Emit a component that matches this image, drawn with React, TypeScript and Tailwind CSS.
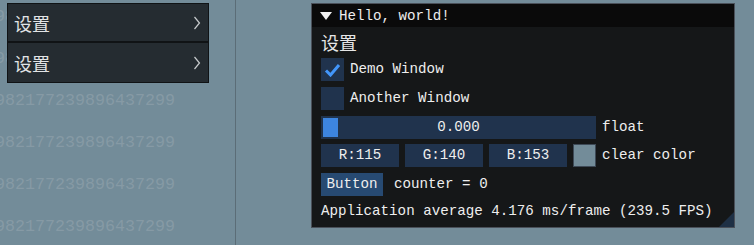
import React from "react";

const mono = { fontFamily: '"Liberation Mono", "DejaVu Sans Mono", monospace' };
const cjk = { fontFamily: '"Noto Sans CJK SC", "Noto Sans", sans-serif' };

function Chevron() {
  return (
    <svg width="8" height="14" viewBox="0 0 8 14" className="block">
      <polyline points="1.5,1 6.5,7 1.5,13" fill="none" stroke="#c9ccce" strokeWidth="1.2" />
    </svg>
  );
}

function MenuRow({ last }: { last?: boolean }) {
  return (
    <div
      className={`flex h-[39px] items-center justify-between pl-[6px] pr-[7px] ${last ? "" : "border-b-2 border-[#101315]"}`}
    >
      <span className="text-[18px] leading-none text-[#e2e4e5]" style={cjk}>
        设置
      </span>
      <Chevron />
    </div>
  );
}

function Checkbox({ checked, label }: { checked?: boolean; label: string }) {
  return (
    <div className="flex h-[23px] items-center gap-[6px]">
      <div className="flex h-[23px] w-[23px] items-center justify-center bg-[#20334d]">
        {checked && (
          <svg width="17" height="14" viewBox="0 0 17 14">
            <polyline points="2,7.5 6.5,12 15,2" fill="none" stroke="#4296fa" strokeWidth="3" />
          </svg>
        )}
      </div>
      <span>{label}</span>
    </div>
  );
}

export default function App() {
  const lines = Array.from({ length: 6 });
  return (
    <div className="relative flex h-[245px] w-[754px] overflow-hidden bg-[#738c99]">
      <div className="relative h-full w-[236px] shrink-0 border-r border-[#5b6d77]">
        <div
          className="absolute left-[-5px] top-[-4px] flex flex-col text-[16.67px] leading-[42px] text-[#869aa5]"
          style={mono}
        >
          {lines.map((_, i) => (
            <div key={i} className="whitespace-nowrap">982177239896437299</div>
          ))}
        </div>
        <div className="absolute left-[7px] top-[3px] w-[202px] border border-[#101315] bg-[#252c31]">
          <MenuRow />
          <MenuRow last />
        </div>
      </div>

      <div
        className="absolute left-[311px] top-[3px] flex h-[225px] w-[424px] flex-col border border-[#4a5059] bg-[#151718] text-[14.2px] leading-none text-[#eeeeee]"
        style={mono}
      >
        <div className="flex h-[23px] shrink-0 items-center bg-[#0a0a0a] pl-[8px] pt-[1px]">
          <svg width="12" height="8" viewBox="0 0 12 8" className="mr-[7px]">
            <polygon points="0,0 12,0 6,8" fill="#f2f2f2" />
          </svg>
          <span>Hello, world!</span>
        </div>
        <div className="relative flex flex-1 flex-col pl-[9px] pt-[3px]">
          <div className="flex h-[23px] items-center text-[18px] text-[#e6e6e6]" style={cjk}>
            设置
          </div>
          <div className="mt-[5px]">
            <Checkbox checked label="Demo Window" />
          </div>
          <div className="mt-[6px]">
            <Checkbox label="Another Window" />
          </div>
          <div className="mt-[6px] flex h-[23px] items-center gap-[6px]">
            <div className="relative flex h-[23px] w-[275px] items-center justify-center bg-[#20334d]">
              <div className="absolute left-[2px] top-[2px] h-[19px] w-[15px] bg-[#3d85e0]" />
              <span>0.000</span>
            </div>
            <span>float</span>
          </div>
          <div className="mt-[5px] flex h-[23px] items-center gap-[6px]">
            <div className="flex h-[23px] w-[78px] items-center justify-center bg-[#20334d]">R:115</div>
            <div className="flex h-[23px] w-[78px] items-center justify-center bg-[#20334d]">G:140</div>
            <div className="flex h-[23px] w-[78px] items-center justify-center bg-[#20334d]">B:153</div>
            <div className="h-[23px] w-[23px] border border-[#3e4a57] bg-[#738c99]" />
            <span>clear color</span>
          </div>
          <div className="mt-[6px] flex h-[23px] items-center gap-[11px]">
            <div className="flex h-[23px] w-[62px] items-center justify-center bg-[#274a72]">Button</div>
            <span>counter = 0</span>
          </div>
          <div className="mt-[4px] flex h-[23px] items-center">
            Application average 4.176 ms/frame (239.5 FPS)
          </div>
          <svg width="15" height="15" viewBox="0 0 15 15" className="absolute bottom-0 right-0">
            <polygon points="15,0 15,15 0,15" fill="#1e3045" />
          </svg>
        </div>
      </div>
    </div>
  );
}
